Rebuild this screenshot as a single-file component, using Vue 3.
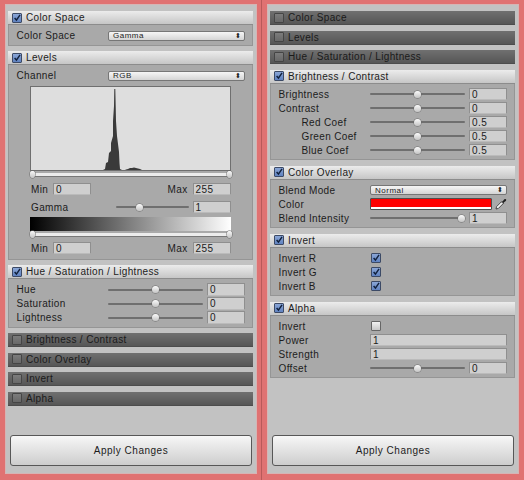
<script setup>
const leftCollapsed = ['Brightness / Contrast', 'Color Overlay', 'Invert', 'Alpha'];
const rightCollapsed = ['Color Space', 'Levels', 'Hue / Saturation / Lightness'];
const hsl = [
  { label: 'Hue', value: '0' },
  { label: 'Saturation', value: '0' },
  { label: 'Lightness', value: '0' },
];
const bc = [
  { label: 'Brightness', value: '0', pct: 50 },
  { label: 'Contrast', value: '0', pct: 50 },
  { label: 'Red Coef', value: '0.5', pct: 50, indent: true },
  { label: 'Green Coef', value: '0.5', pct: 50, indent: true },
  { label: 'Blue Coef', value: '0.5', pct: 50, indent: true },
];
const inverts = ['Invert R', 'Invert G', 'Invert B'];
const histPoints = '0,85 71,85 73,84 75,83 76,77 78,76 79,67 81,65 81,57 83,50 83,35 84,20 84.3,3 85.3,3 85.7,20 86,35 87,50 88,58 89,66 89.5,77 90,83 92,84 93,85 95,84 96,83.5 98,83 100,82 102,82 104,81.5 106,82 108,82.5 110,83 112,84 114,84.5 118,85 201,85';
</script>

<template>
  <div class="page">
    <div class="panel left">
      <div class="inner">
        <section class="section">
          <header class="head on"><span class="cb checked"><svg viewBox="0 0 10 10"><path d="M2 5 L4.3 7.6 L8.8 1" /></svg></span>Color Space</header>
          <div class="body">
            <div class="row"><span class="lab">Color Space</span><div class="ctl"><div class="drop">Gamma<span class="arrows">⬍</span></div></div></div>
          </div>
        </section>

        <section class="section">
          <header class="head on"><span class="cb checked"><svg viewBox="0 0 10 10"><path d="M2 5 L4.3 7.6 L8.8 1" /></svg></span>Levels</header>
          <div class="body levels">
            <div class="row"><span class="lab">Channel</span><div class="ctl"><div class="drop">RGB<span class="arrows">⬍</span></div></div></div>
            <div class="lv">
              <svg class="hist" viewBox="0 0 201 85" preserveAspectRatio="none"><polygon :points="histPoints" /></svg>
              <div class="range top"><i class="h l"></i><i class="h r"></i></div>
              <div class="mm first"><span class="mlab">Min</span><span class="field">0</span><span class="spacer"></span><span class="mlab">Max</span><span class="field">255</span></div>
              <div class="mm gamma"><span class="mlab grow">Gamma</span>
                <div class="slider short"><i class="thumb" style="left: 33%"></i></div>
                <span class="field">1</span></div>
              <div class="grad"></div>
              <div class="range"><i class="h l"></i><i class="h r"></i></div>
              <div class="mm last"><span class="mlab">Min</span><span class="field">0</span><span class="spacer"></span><span class="mlab">Max</span><span class="field">255</span></div>
            </div>
          </div>
        </section>

        <section class="section">
          <header class="head on"><span class="cb checked"><svg viewBox="0 0 10 10"><path d="M2 5 L4.3 7.6 L8.8 1" /></svg></span>Hue / Saturation / Lightness</header>
          <div class="body">
            <div v-for="r in hsl" :key="r.label" class="row">
              <span class="lab">{{ r.label }}</span>
              <div class="ctl"><div class="slider"><i class="thumb" style="left: 50%"></i></div><span class="num">{{ r.value }}</span></div>
            </div>
          </div>
        </section>

        <section v-for="t in leftCollapsed" :key="t" class="section">
          <header class="head off"><span class="cb"></span>{{ t }}</header>
        </section>

        <button class="apply">Apply Changes</button>
      </div>
    </div>

    <div class="panel right">
      <div class="inner">
        <section v-for="t in rightCollapsed" :key="t" class="section">
          <header class="head off"><span class="cb"></span>{{ t }}</header>
        </section>

        <section class="section">
          <header class="head on"><span class="cb checked"><svg viewBox="0 0 10 10"><path d="M2 5 L4.3 7.6 L8.8 1" /></svg></span>Brightness / Contrast</header>
          <div class="body">
            <div v-for="r in bc" :key="r.label" class="row">
              <span class="lab" :class="{ indent: r.indent }">{{ r.label }}</span>
              <div class="ctl"><div class="slider"><i class="thumb" :style="{ left: r.pct + '%' }"></i></div><span class="num">{{ r.value }}</span></div>
            </div>
          </div>
        </section>

        <section class="section">
          <header class="head on"><span class="cb checked"><svg viewBox="0 0 10 10"><path d="M2 5 L4.3 7.6 L8.8 1" /></svg></span>Color Overlay</header>
          <div class="body">
            <div class="row"><span class="lab">Blend Mode</span><div class="ctl"><div class="drop">Normal<span class="arrows">⬍</span></div></div></div>
            <div class="row"><span class="lab">Color</span><div class="ctl"><div class="swatch"></div>
              <svg class="dropper" viewBox="0 0 12 12"><path class="glass" d="M1 11 L1.6 8.6 L6.4 3.8 L8.2 5.6 L3.4 10.4 Z" /><path class="bulb" d="M6 2.8 L7.5 3.4 L9.3 1.2 Q10.4 0.6 11 1.2 Q11.6 2 10.8 2.9 L8.7 4.6 L9.2 6 Z" /></svg>
            </div></div>
            <div class="row"><span class="lab">Blend Intensity</span><div class="ctl"><div class="slider"><i class="thumb" style="left: 96%"></i></div><span class="num">1</span></div></div>
          </div>
        </section>

        <section class="section">
          <header class="head on"><span class="cb checked"><svg viewBox="0 0 10 10"><path d="M2 5 L4.3 7.6 L8.8 1" /></svg></span>Invert</header>
          <div class="body">
            <div v-for="t in inverts" :key="t" class="row"><span class="lab">{{ t }}</span><div class="ctl"><span class="cb checked inrow"><svg viewBox="0 0 10 10"><path d="M2 5 L4.3 7.6 L8.8 1" /></svg></span></div></div>
          </div>
        </section>

        <section class="section">
          <header class="head on"><span class="cb checked"><svg viewBox="0 0 10 10"><path d="M2 5 L4.3 7.6 L8.8 1" /></svg></span>Alpha</header>
          <div class="body">
            <div class="row"><span class="lab">Invert</span><div class="ctl"><span class="cb blank inrow"></span></div></div>
            <div class="row"><span class="lab">Power</span><div class="ctl"><span class="num wide">1</span></div></div>
            <div class="row"><span class="lab">Strength</span><div class="ctl"><span class="num wide">1</span></div></div>
            <div class="row"><span class="lab">Offset</span><div class="ctl"><div class="slider"><i class="thumb" style="left: 50%"></i></div><span class="num">0</span></div></div>
          </div>
        </section>

        <button class="apply">Apply Changes</button>
      </div>
    </div>
  </div>
</template>

<style scoped>
.page {
  display: flex;
  width: 524px;
  height: 480px;
  background: #e07272;
  font-family: "Liberation Sans", sans-serif;
  font-size: 10px;
  letter-spacing: 0.35px;
  color: #1c1c1c;
  overflow: hidden;
}
.panel {
  width: 262px;
  height: 480px;
  box-sizing: border-box;
  padding: 4.5px 6px 7px 6px;
  display: flex;
  flex: none;
}
.panel.left { box-shadow: inset -1px 0 0 #b85a5a; }
.inner {
  flex: 1;
  min-width: 0;
  display: flex;
  flex-direction: column;
  background: #c2c2c2;
  box-shadow: 0 0 0 1px #d6b4b4;
  padding: 6.5px 3px 7px 2px;
}
.section { margin-bottom: 5.5px; }
.head {
  height: 14px;
  box-sizing: border-box;
  display: flex;
  align-items: center;
  padding-left: 4px;
  border-bottom: 1px solid #8c8c8c;
}
.head.on { background: linear-gradient(#ececec, #c6c6c6); }
.head.off {
  background: linear-gradient(#707070, #565656);
  border-bottom-color: #4c4c4c;
  color: #1a1a1a;
}
.cb {
  width: 8px;
  height: 8px;
  flex: none;
  margin-right: 4px;
  border: 1px solid #454545;
  border-radius: 1px;
  background: linear-gradient(#7c7c7c, #686868);
  display: inline-flex;
}
.cb.checked {
  background: linear-gradient(#8aa6d6, #5f82c0);
  border-color: #3c4a66;
}
.cb.blank {
  background: linear-gradient(#f2f2f2, #c8c8c8);
  border-color: #666;
}
.cb.inrow { margin-left: 1px; margin-right: 0; }
.cb svg { width: 8px; height: 8px; }
.cb path { fill: none; stroke: #10203c; stroke-width: 1.8; }
.body {
  background: #a9a9a9;
  border: 1px solid #959595;
  border-top: none;
  padding: 3.5px 7px 2px 7.5px;
}
.row {
  height: 14px;
  display: flex;
  align-items: center;
}
.lab { width: 91.5px; flex: none; white-space: nowrap; }
.lab.indent { padding-left: 23px; box-sizing: border-box; }
.ctl {
  flex: 1;
  min-width: 0;
  height: 14px;
  display: flex;
  align-items: center;
}
.drop {
  flex: 1;
  height: 10px;
  box-sizing: border-box;
  display: flex;
  align-items: center;
  padding: 0 3px 0 4px;
  font-size: 8px;
  letter-spacing: 0.5px;
  background: linear-gradient(#f6f6f6, #d4d4d4);
  border: 1px solid #767676;
  border-radius: 2px;
}
.arrows { margin-left: auto; font-size: 7px; letter-spacing: 0; line-height: 8px; }
.slider {
  position: relative;
  flex: 1;
  height: 2px;
  margin-right: 4px;
  background: #6f6f6f;
  border-radius: 1px;
}
.slider.short { flex: none; width: 73px; }
.thumb {
  position: absolute;
  top: -2.5px;
  width: 7px;
  height: 7px;
  margin-left: -3.5px;
  border-radius: 50%;
  background: linear-gradient(#fbfbfb, #c4c4c4);
  box-shadow: 0 0 0 0.5px #6a6a6a;
}
.num, .field {
  height: 12.5px;
  box-sizing: border-box;
  display: flex;
  align-items: center;
  flex: none;
  width: 38px;
  padding-left: 2px;
  background: #cfcfcf;
  border: 1px solid #8f8f8f;
  border-bottom-color: #bbb;
  letter-spacing: 0.4px;
}
.num.wide { flex: 1; width: auto; }
.swatch {
  width: 123px;
  height: 12px;
  box-sizing: border-box;
  background: linear-gradient(#f00 0 8px, #fff 8px);
  border: 1px solid #4e4e4e;
  border-radius: 1px;
}
.dropper { width: 12px; height: 12px; margin-left: 3px; flex: none; }
.dropper .glass { fill: #efefef; stroke: #2a2a2a; stroke-width: 0.8; }
.dropper .bulb { fill: #202020; }
.lv { margin: 3.5px 0 0 13px; width: 201px; }
.body.levels { padding-bottom: 4px; }
.hist {
  display: block;
  width: 201px;
  height: 85px;
  box-sizing: border-box;
  background: #dedede;
  outline: 1px solid #6f6f6f;
  outline-offset: -1px;
}
.hist polygon { fill: #3a3a3a; }
.range {
  position: relative;
  height: 8px;
}
.range.top { height: 7px; }
.range::before {
  content: "";
  position: absolute;
  left: 2px;
  right: 0;
  top: 2px;
  height: 3px;
  background: #ececec;
  border-bottom: 1px solid #777;
}
.h {
  position: absolute;
  top: 0;
  width: 5px;
  height: 7px;
  border-radius: 40% 40% 50% 50%;
  background: linear-gradient(#f8f8f8, #c4c4c4);
  box-shadow: 0 0 0 0.5px #6a6a6a;
}
.h.l { left: 0; }
.h.r { right: -1px; }
.mm {
  height: 13px;
  display: flex;
  align-items: center;
}
.mm.first { margin-top: 4.5px; }
.mm.gamma { margin-top: 5px; }
.mm.last { margin-top: 3px; }
.mlab { margin-left: 1.5px; width: 22px; flex: none; }
.mm .spacer + .mlab { width: auto; margin-right: 5px; }
.mm .mlab.grow { flex: 1; }
.spacer { flex: 1; }
.grad {
  height: 14px;
  margin-top: 3px;
  background: linear-gradient(90deg, #000, #fff);
}
.apply {
  margin: auto 1px 0 2px;
  height: 31px;
  flex: none;
  font: inherit;
  letter-spacing: 0.5px;
  color: #1c1c1c;
  background: linear-gradient(#f7f7f7, #cdcdcd);
  border: 1px solid #575757;
  border-radius: 3px;
  padding: 0;
}
</style>
<style>
html, body { margin: 0; padding: 0; }
</style>
